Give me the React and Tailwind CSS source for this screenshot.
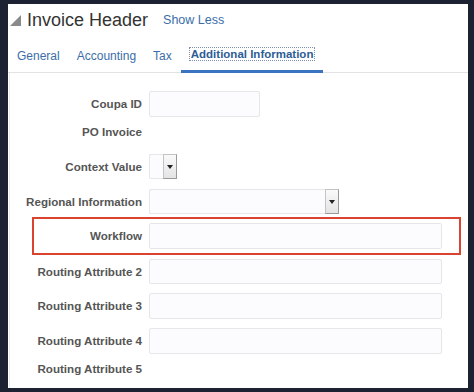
import { useState } from "react";

const font = { fontFamily: '"Liberation Sans", Arial, Helvetica, sans-serif' };

function TextInput({ width }) {
  return (
    <div
      className={`h-full rounded-[2px] border border-[#e6e6ea] bg-[#fcfcfe] ${width}`}
    />
  );
}

function SelectBox({ width }) {
  return (
    <div className={`flex h-full ${width}`}>
      <div className="flex-1 rounded-l-[2px] border border-r-0 border-[#e6e6ea] bg-[#fcfcfe]" />
      <div className="flex w-[14px] items-center justify-center border border-[#c4c4c4] border-b-[#9a9a9a] border-r-[#9a9a9a] bg-gradient-to-b from-[#fafafa] to-[#e4e4e4]">
        <svg width="6" height="4" viewBox="0 0 6 4">
          <path d="M0 0 L6 0 L3 4 Z" fill="#222" />
        </svg>
      </div>
    </div>
  );
}

function Row({ label, mt, h = "h-[26px]", children, highlight }) {
  return (
    <div className={`relative flex items-center ${mt} ${h}`}>
      <div className="w-[132px] shrink-0 text-right text-[11.6px] font-bold leading-none text-[#555]">
        {label}
      </div>
      <div className="ml-[7px] h-full">{children}</div>
      {highlight && (
        <div className="pointer-events-none absolute left-[22px] top-[-6px] h-[38px] w-[429px] border-2 border-[#d9432f]" />
      )}
    </div>
  );
}

export default function App() {
  const [tab, setTab] = useState("Additional Information");
  const tabs = ["General", "Accounting", "Tax"];

  return (
    <div
      className="h-[392px] w-[474px] bg-[#1d2232] pb-[4px] pl-[8px] pr-[6px] pt-[4px]"
      style={font}
    >
      <div className="flex h-full flex-col bg-white">
        {/* header */}
        <div className="flex items-center pl-[2px] pt-[5px]">
          <svg width="11" height="11" viewBox="0 0 11 11" className="mt-[1px]">
            <path d="M11 0 L11 11 L0 11 Z" fill="#8a8a8a" />
          </svg>
          <span className="ml-[6px] text-[18px] leading-[22px] text-[#333]">
            Invoice Header
          </span>
          <span className="ml-[15px] mt-[1px] text-[12.5px] text-[#3b6ea8]">
            Show Less
          </span>
        </div>

        {/* tabs */}
        <div className="mt-[10px] flex items-end border-b border-[#e2e2e2] pl-[9px]">
          {tabs.map((t) => (
            <button
              key={t}
              onClick={() => setTab(t)}
              className="mr-[17px] pb-[8px] text-[12px] leading-[16px] text-[#3b6ea8]"
            >
              {t}
            </button>
          ))}
          <div className="-mb-px ml-[-8px] border-b-[3px] border-[#3a74c0] px-[8px] pb-[5px]">
            <span className="border border-dotted border-[#8090b0] px-px text-[11.5px] font-bold leading-[16px] text-[#2d5d94]">
              {tab === "Additional Information" ? tab : "Additional Information"}
            </span>
          </div>
        </div>

        {/* form */}
        <div className="ml-[1px] flex flex-1 flex-col border-l border-[#ececec]">
          <Row label="Coupa ID" mt="mt-[18px]">
            <TextInput width="w-[111px]" />
          </Row>
          <Row label="PO Invoice" mt="mt-[5px]" h="h-[20px]" />
          <Row label="Context Value" mt="mt-[12px]" h="h-[25px]">
            <SelectBox width="w-[28px]" />
          </Row>
          <Row label="Regional Information" mt="mt-[10px]" h="h-[25px]">
            <SelectBox width="w-[190px]" />
          </Row>
          <Row label="Workflow" mt="mt-[9px]" highlight>
            <TextInput width="w-[293px]" />
          </Row>
          <Row label="Routing Attribute 2" mt="mt-[10px]" h="h-[25px]">
            <TextInput width="w-[293px]" />
          </Row>
          <Row label="Routing Attribute 3" mt="mt-[9px]">
            <TextInput width="w-[293px]" />
          </Row>
          <Row label="Routing Attribute 4" mt="mt-[9px]">
            <TextInput width="w-[293px]" />
          </Row>
          <Row label="Routing Attribute 5" mt="mt-[5px]" h="h-[20px]" />
        </div>
      </div>
    </div>
  );
}
